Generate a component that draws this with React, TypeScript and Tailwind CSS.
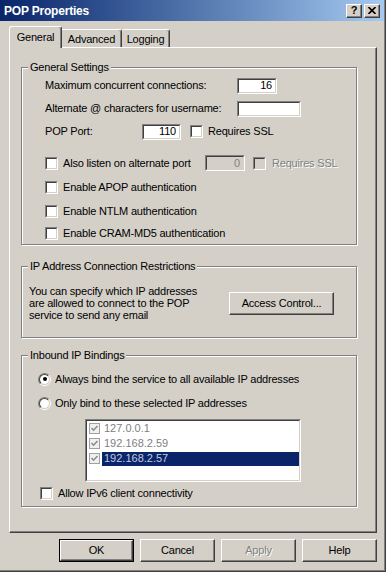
import React from "react";

function Check({ disabled = false }: { disabled?: boolean }) {
  return (
    <span className="inline-block w-[13px] h-[13px] shrink-0 border border-t-[#808080] border-l-[#808080] border-r-white border-b-white">
      <span
        className={
          disabled
            ? "block w-full h-full border border-t-[#404040] border-l-[#404040] border-r-[#d4d0c8] border-b-[#d4d0c8] bg-[#d4d0c8]"
            : "block w-full h-full border border-t-[#404040] border-l-[#404040] border-r-[#d4d0c8] border-b-[#d4d0c8] bg-white"
        }
      />
    </span>
  );
}

function Radio({ checked = false }: { checked?: boolean }) {
  return (
    <span className="inline-block w-[13px] h-[13px] shrink-0 rounded-full border border-t-[#808080] border-l-[#808080] border-r-white border-b-white">
      <span className="flex w-full h-full rounded-full border border-t-[#404040] border-l-[#404040] border-r-[#d4d0c8] border-b-[#d4d0c8] bg-white items-center justify-center">
        {checked && <span className="block w-[4px] h-[4px] rounded-full bg-black" />}
      </span>
    </span>
  );
}

function Edit({ className, value, disabled = false }: { className: string; value?: string; disabled?: boolean }) {
  return (
    <span className={"inline-block shrink-0 border border-t-[#808080] border-l-[#808080] border-r-white border-b-white " + className}>
      <span
        className={
          disabled
            ? "flex w-full h-full items-center justify-end pr-[3px] border border-t-[#404040] border-l-[#404040] border-r-[#d4d0c8] border-b-[#d4d0c8] bg-[#d4d0c8] text-[#808080]"
            : "flex w-full h-full items-center justify-end pr-[3px] border border-t-[#404040] border-l-[#404040] border-r-[#d4d0c8] border-b-[#d4d0c8] bg-white text-black"
        }
      >
        {value}
      </span>
    </span>
  );
}

function Btn({ children, def = false, disabled = false, className = "" }: { children: React.ReactNode; def?: boolean; disabled?: boolean; className?: string }) {
  const inner = (
    <span className="flex w-full h-full items-center justify-center border border-t-white border-l-white border-r-[#404040] border-b-[#404040] shadow-[inset_-1px_-1px_0_#808080]">
      <span className={disabled ? "text-[#808080] [text-shadow:1px_1px_0_#fff]" : "text-black"}>{children}</span>
    </span>
  );
  if (def) {
    return <span className={"block h-[23px] border border-black " + className}>{inner}</span>;
  }
  return <span className={"block h-[23px] " + className}>{inner}</span>;
}

function TitleBtn({ children }: { children: React.ReactNode }) {
  return (
    <span className="flex w-[16px] h-[14px] items-center justify-center bg-[#d4d0c8] border border-t-white border-l-white border-r-[#404040] border-b-[#404040] shadow-[inset_-1px_-1px_0_#808080]">
      {children}
    </span>
  );
}

function Group({ title, children, className = "" }: { title: string; children: React.ReactNode; className?: string }) {
  return (
    <fieldset className={"w-[336px] border border-[#808080] shadow-[inset_1px_1px_0_#fff,1px_1px_0_#fff] " + className}>
      <legend className="ml-[6px] px-[2px] bg-[#d4d0c8] leading-[13px]">{title}</legend>
      {children}
    </fieldset>
  );
}

function ListCheck() {
  return (
    <svg width="11" height="11" viewBox="0 0 11 11" className="shrink-0">
      <rect x="0.5" y="0.5" width="10" height="10" fill="#f0f0f0" stroke="#a0a0a0" />
      <path d="M2.5 5 L4.5 7.2 L8.5 3" fill="none" stroke="#8c8c8c" strokeWidth="1.6" />
    </svg>
  );
}

export default function App() {
  return (
    <div className="w-[386px] h-[572px] bg-[#d4d0c8] border-r border-b border-[#404040] font-['Liberation_Sans',Arial,sans-serif] text-[11px] leading-[13px] tracking-[-0.2px] text-black">
      <div className="h-full border-r border-b border-[#808080] flex flex-col">
        {/* Title bar */}
        <div className="h-[21px] shrink-0 flex items-center justify-between pl-[4px] pr-[4px] bg-linear-to-r from-[#0a246a] to-[#a6caf0]">
          <span className="text-white font-bold text-[12px] pt-[1px]">POP Properties</span>
          <div className="flex gap-[2px]">
            <TitleBtn>
              <span className="font-bold text-[11px] leading-[11px] text-black">?</span>
            </TitleBtn>
            <TitleBtn>
              <svg width="8" height="7" viewBox="0 0 8 7">
                <path d="M0.5 0 L7.5 7 M7.5 0 L0.5 7" stroke="#000" strokeWidth="1.6" />
              </svg>
            </TitleBtn>
          </div>
        </div>

        {/* Tabs */}
        <div className="mt-[5px] ml-[9px] flex items-end h-[21px]">
          <div className="relative z-10 -mb-[1px] h-[22px] w-[53px] flex items-center justify-center bg-[#d4d0c8] border-t border-l border-r border-t-white border-l-white border-r-[#404040] shadow-[inset_-1px_0_0_#808080] rounded-t-[3px]">
            General
          </div>
          <div className="h-[18px] w-[60px] flex items-center justify-center border-t border-r border-t-white border-r-[#404040] shadow-[inset_-1px_0_0_#808080] rounded-tr-[3px] pt-[1px]">
            Advanced
          </div>
          <div className="h-[18px] w-[48px] flex items-center justify-center border-t border-r border-t-white border-r-[#404040] shadow-[inset_-1px_0_0_#808080] rounded-t-[3px] pt-[1px]">
            Logging
          </div>
        </div>

        {/* Panel */}
        <div className="ml-[9px] w-[368px] h-[486px] shrink-0 border border-t-white border-l-white border-r-[#404040] border-b-[#404040] shadow-[inset_-1px_-1px_0_#808080] pt-[13px] pl-[11px]">
          <Group title="General Settings">
            <div className="pl-[23px]">
              <div className="h-[23px] flex items-center">
                <span className="w-[192px] shrink-0">Maximum concurrent connections:</span>
                <Edit className="w-[40px] h-[16px]" value="16" />
              </div>
              <div className="h-[23px] flex items-center">
                <span className="w-[192px] shrink-0">Alternate @ characters for username:</span>
                <Edit className="w-[64px] h-[16px]" value="" />
              </div>
              <div className="h-[23px] flex items-center">
                <span className="w-[97px] shrink-0">POP Port:</span>
                <Edit className="w-[39px] h-[16px]" value="110" />
                <span className="ml-[9px] flex"><Check /></span>
                <span className="ml-[5px]">Requires SSL</span>
              </div>
              <div className="mt-[8px] h-[24px] flex items-center">
                <Check />
                <span className="ml-[5px] w-[142px] shrink-0">Also listen on alternate port</span>
                <Edit className="w-[40px] h-[16px]" value="0" disabled />
                <span className="ml-[8px] flex"><Check disabled /></span>
                <span className="ml-[6px] text-[#808080] [text-shadow:1px_1px_0_#fff]">Requires SSL</span>
              </div>
              <div className="h-[24px] flex items-center">
                <Check />
                <span className="ml-[5px]">Enable APOP authentication</span>
              </div>
              <div className="h-[24px] flex items-center">
                <Check />
                <span className="ml-[5px]">Enable NTLM authentication</span>
              </div>
              <div className="h-[21px] flex items-center">
                <Check />
                <span className="ml-[5px]">Enable CRAM-MD5 authentication</span>
              </div>
            </div>
          </Group>

          <Group title="IP Address Connection Restrictions" className="mt-[15px]">
            <div className="pt-[12px] pb-[16px] pl-[7px] flex items-center">
              <div className="w-[200px] shrink-0 leading-[12px]">
                <div>You can specify which IP addresses</div>
                <div>are allowed to connect to the POP</div>
                <div>service to send any email</div>
              </div>
              <Btn className="w-[105px]">Access Control...</Btn>
            </div>
          </Group>

          <Group title="Inbound IP Bindings" className="mt-[11px]">
            <div className="pt-[5px] pb-[2px]">
              <div className="h-[24px] flex items-center pl-[16px]">
                <Radio checked />
                <span className="ml-[4px]">Always bind the service to all available IP addresses</span>
              </div>
              <div className="h-[24px] flex items-center pl-[16px]">
                <Radio />
                <span className="ml-[4px]">Only bind to these selected IP addresses</span>
              </div>
              <div className="mt-[4px] ml-[63px] w-[216px] h-[63px] border border-t-[#808080] border-l-[#808080] border-r-white border-b-white">
                <div className="h-full border border-t-[#404040] border-l-[#404040] border-r-[#d4d0c8] border-b-[#d4d0c8] bg-white">
                  <div className="h-[15px] flex items-center pl-[2px]">
                    <ListCheck />
                    <span className="ml-[2px] pl-[2px] text-[#808080] tracking-normal">127.0.0.1</span>
                  </div>
                  <div className="h-[15px] flex items-center pl-[2px]">
                    <ListCheck />
                    <span className="ml-[2px] pl-[2px] text-[#808080] tracking-normal">192.168.2.59</span>
                  </div>
                  <div className="h-[15px] flex items-center pl-[2px]">
                    <ListCheck />
                    <span className="ml-[2px] pl-[2px] flex-1 h-[14px] flex items-center bg-[#0a246a] text-[#c4cae0] tracking-normal">192.168.2.57</span>
                  </div>
                </div>
              </div>
              <div className="h-[22px] flex items-center pl-[18px]">
                <Check />
                <span className="ml-[5px]">Allow IPv6 client connectivity</span>
              </div>
            </div>
          </Group>
        </div>

        {/* Buttons */}
        <div className="mt-[6px] flex justify-end gap-[6px] pr-[7px]">
          <Btn def className="w-[75px]">OK</Btn>
          <Btn className="w-[75px]">Cancel</Btn>
          <Btn disabled className="w-[75px]">Apply</Btn>
          <Btn className="w-[75px]">Help</Btn>
        </div>
      </div>
    </div>
  );
}
